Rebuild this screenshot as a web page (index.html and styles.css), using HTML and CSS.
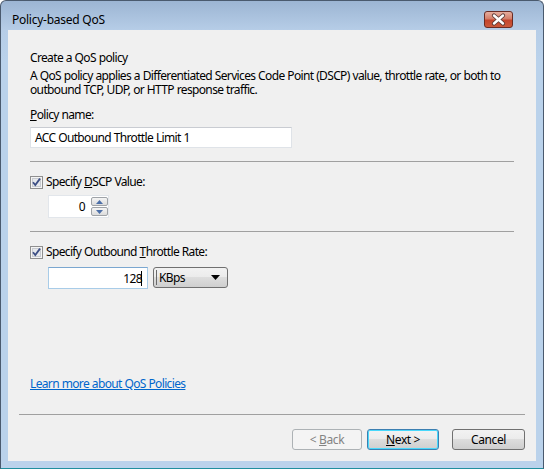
FILE: index.html
```html
<!DOCTYPE html>
<html>
<head>
<meta charset="utf-8">
<link rel="stylesheet" href="styles.css">
</head>
<body>
<div class="window">
  <div class="titlebar">
    <span class="title">Policy-based QoS</span>
    <span class="close">
      <svg width="29" height="17" viewBox="0 0 29 17">
        <path d="M10 4.5 L19 12.5 M19 4.5 L10 12.5" stroke="#5a3a36" stroke-width="4.2" stroke-linecap="round"/>
        <path d="M10 4.5 L19 12.5 M19 4.5 L10 12.5" stroke="#ffffff" stroke-width="2.4" stroke-linecap="round"/>
      </svg>
    </span>
  </div>
  <div class="client">
    <div class="main">
      <p class="heading">Create a QoS policy</p>
      <p class="desc">A QoS policy applies a Differentiated Services Code Point (DSCP) value, throttle rate, or both to</p>
      <p class="desc2">outbound TCP, UDP, or HTTP response traffic.</p>
      <p class="label"><u>P</u>olicy name:</p>
      <div class="textbox name">ACC Outbound Throttle Limit 1</div>
      <div class="sep"></div>
      <div class="check-row">
        <span class="checkbox"><svg width="13" height="13" viewBox="0 0 13 13"><rect x="0.5" y="0.5" width="12" height="12" fill="#f4f4f4" stroke="#8f8f8f"/><rect x="2.5" y="2.5" width="8" height="8" fill="#e6e8ec" stroke="#c8cbd0"/><path d="M3 6.2 L5.3 9 L10 2.6" fill="none" stroke="#3d4f85" stroke-width="1.8"/></svg></span>
        <span>Specify <u>D</u>SCP Value:</span>
      </div>
      <div class="spinner">
        <div class="spin-value">0</div>
        <div class="spin-btns">
          <span class="spin-btn"><svg width="7" height="4" viewBox="0 0 7 4"><path d="M0 4 L3.5 0 L7 4 Z" fill="#4c6fa8"/></svg></span>
          <span class="spin-btn"><svg width="7" height="4" viewBox="0 0 7 4"><path d="M0 0 L3.5 4 L7 0 Z" fill="#4c6fa8"/></svg></span>
        </div>
      </div>
      <div class="sep"></div>
      <div class="check-row">
        <span class="checkbox"><svg width="13" height="13" viewBox="0 0 13 13"><rect x="0.5" y="0.5" width="12" height="12" fill="#f4f4f4" stroke="#8f8f8f"/><rect x="2.5" y="2.5" width="8" height="8" fill="#e6e8ec" stroke="#c8cbd0"/><path d="M3 6.2 L5.3 9 L10 2.6" fill="none" stroke="#3d4f85" stroke-width="1.8"/></svg></span>
        <span>Specify Outbound <u>T</u>hrottle Rate:</span>
      </div>
      <div class="rate-row">
        <div class="textbox rate"><span>128</span><span class="caret"></span></div>
        <div class="combo">
          <span class="combo-text">KBps</span>
          <svg width="9" height="5" viewBox="0 0 9 5"><path d="M0 0 L9 0 L4.5 5 Z" fill="#000"/></svg>
        </div>
      </div>
      <a class="link" href="#">Learn more about QoS Policies</a>
    </div>
    <div class="footer">
      <div class="footer-sep"></div>
      <div class="buttons">
        <span class="btn back disabled">&lt;&nbsp;<u>B</u>ack</span>
        <span class="btn next default"><u>N</u>ext&nbsp;&gt;</span>
        <span class="btn cancel">Cancel</span>
      </div>
    </div>
  </div>
</div>
</body>
</html>
```
FILE: styles.css
```css
html, body {
  margin: 0;
  padding: 0;
  background: #ffffff;
}
body {
  font-family: "Noto Sans", "Open Sans", sans-serif;
  font-size: 12px;
  color: #000;
}
.window {
  width: 544px;
  height: 469px;
  box-sizing: border-box;
  border: 1px solid #4a5a6e;
  border-bottom-color: #1f8f9e;
  border-radius: 6px 6px 0 0;
  background: linear-gradient(to bottom, #9cb5d3 0px, #b6cde7 29px, #bad2eb 60px, #bad2eb 100%);
  display: flex;
  flex-direction: column;
  overflow: hidden;
}
.titlebar {
  height: 29px;
  box-sizing: border-box;
  padding: 9px 30px 0 11px;
  display: flex;
  align-items: flex-start;
  justify-content: space-between;
}
.title {
  line-height: 16px;
  font-size: 12px;
  margin-top: 2px;
  letter-spacing: -0.25px;
}
.close {
  width: 29px;
  height: 17px;
  box-sizing: border-box;
  margin-top: 1px;
  border: 1px solid #6a2c24;
  border-radius: 3px;
  background: linear-gradient(to bottom, #e6ae9f 0%, #d47e69 45%, #c4452c 55%, #cc5a3c 100%);
  display: flex;
  align-items: center;
  justify-content: center;
  overflow: hidden;
}
.close svg { display: block; margin: -1px; }
.client {
  flex: 1;
  margin: 0 7px 7px 7px;
  background: #f0f0f0;
  display: flex;
  flex-direction: column;
}
.main {
  flex: 1;
  padding: 21px 22px 23px 22px;
  display: flex;
  flex-direction: column;
  align-items: flex-start;
  letter-spacing: -0.65px;
  word-spacing: 0.3px;
}
p { margin: 0; }
.heading { line-height: 14px; }
.desc { line-height: 14px; margin-top: 4px; white-space: nowrap; }
.desc2 { line-height: 14px; white-space: nowrap; }
.label { line-height: 14px; margin-top: 11px; }
.textbox {
  box-sizing: border-box;
  background: #fff;
  border: 1px solid #dfe3e8;
  border-top-color: #c9ccd2;
  display: flex;
  align-items: center;
}
.name {
  margin-top: 5px;
  width: 262px;
  height: 21px;
  padding-left: 4px;
}
.sep {
  align-self: stretch;
  margin-top: 13px;
  height: 1px;
  background: #a0a0a0;
}
.check-row {
  margin-top: 13px;
  height: 14px;
  line-height: 14px;
  display: flex;
  align-items: center;
  gap: 3px;
}
.checkbox { display: block; width: 13px; height: 13px; margin-top: 1px; }
.checkbox svg { display: block; }
.spinner {
  margin-top: 6px;
  margin-left: 18px;
  width: 61px;
  height: 23px;
  box-sizing: border-box;
  background: #fff;
  border: 1px solid #e2e6eb;
  display: flex;
  align-items: center;
}
.spin-value {
  flex: 1;
  text-align: right;
  padding-right: 6px;
}
.spin-btns {
  width: 17px;
  display: flex;
  flex-direction: column;
  gap: 1px;
}
.spin-btn {
  height: 9px;
  box-sizing: border-box;
  border: 1px solid #9fa3a8;
  border-radius: 2px;
  background: linear-gradient(to bottom, #f4f4f4, #dcdcdc);
  display: flex;
  align-items: center;
  justify-content: center;
}
.spin-btn svg { display: block; }
.rate-row {
  margin-top: 8px;
  margin-left: 18px;
  display: flex;
  align-items: flex-start;
  gap: 5px;
}
.rate {
  width: 100px;
  height: 22px;
  justify-content: flex-end;
  padding-right: 5px;
  border: 1px solid #a8cce8;
  border-top-color: #7ba7d0;
}
.caret {
  width: 1px;
  height: 15px;
  background: #000;
  margin-left: -1px;
}
.combo {
  width: 75px;
  height: 21px;
  box-sizing: border-box;
  border: 1px solid #707070;
  border-radius: 3px;
  background: linear-gradient(to bottom, #f2f2f2 0%, #ebebeb 50%, #dddddd 50%, #cfcfcf 100%);
  display: flex;
  align-items: center;
  justify-content: space-between;
  padding: 0 7px 0 2px;
}
.combo-text {
  padding: 0 2px;
  line-height: 15px;
  border-left: 1px solid #6a6a6a;
}
.combo svg { display: block; }
.link {
  margin-top: auto;
  line-height: 14px;
  color: #0066cc;
  text-decoration: underline;
}
.footer {
  padding: 0 11px 11px 11px;
  letter-spacing: -0.4px;
}
.footer-sep {
  height: 1px;
  background: #a0a0a0;
}
.buttons {
  margin-top: 14px;
  display: flex;
  justify-content: flex-end;
}
.btn {
  height: 21px;
  box-sizing: border-box;
  border: 1px solid #707070;
  border-radius: 3px;
  background: linear-gradient(to bottom, #f2f2f2 0%, #ebebeb 50%, #dddddd 50%, #cfcfcf 100%);
  display: flex;
  align-items: center;
  justify-content: center;
  line-height: 14px;
}
.back { width: 70px; }
.next { width: 72px; margin-left: 5px; }
.cancel { width: 73px; margin-left: 13px; }
.disabled {
  border-color: #adb2b5;
  background: #f4f4f4;
  color: #838383;
}
.default {
  border-color: #3c7fb1;
  box-shadow: inset 0 0 0 1px #48d8fb;
}
```
